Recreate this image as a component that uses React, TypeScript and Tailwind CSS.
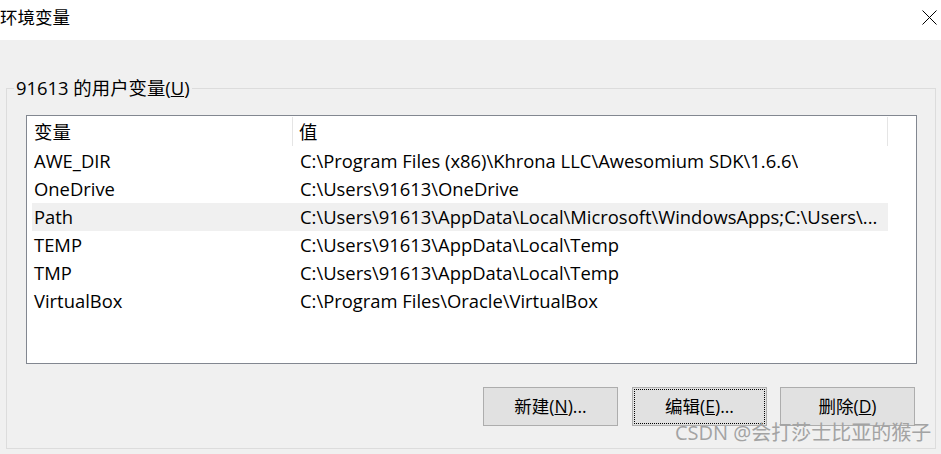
import React from 'react';

const rows = [
  { name: 'AWE_DIR', value: 'C:\\Program Files (x86)\\Khrona LLC\\Awesomium SDK\\1.6.6\\' },
  { name: 'OneDrive', value: 'C:\\Users\\91613\\OneDrive' },
  { name: 'Path', value: 'C:\\Users\\91613\\AppData\\Local\\Microsoft\\WindowsApps;C:\\Users\\...', selected: true },
  { name: 'TEMP', value: 'C:\\Users\\91613\\AppData\\Local\\Temp' },
  { name: 'TMP', value: 'C:\\Users\\91613\\AppData\\Local\\Temp' },
  { name: 'VirtualBox', value: 'C:\\Program Files\\Oracle\\VirtualBox' },
];

const font = { fontFamily: '"Open Sans", "Noto Sans CJK SC", sans-serif' };

const Button: React.FC<{ label: string; hot: string; tail?: string; focused?: boolean; className?: string }> = ({
  label,
  hot,
  tail = '',
  focused,
  className = '',
}) => (
  <div
    className={`relative w-[135px] h-[39px] bg-[#e1e1e1] border border-[#adadad] flex items-center justify-center text-[17.5px] text-black ${className}`}
  >
    {focused && <div className="absolute inset-[1px] border border-dotted border-black" />}
    <span>
      {label}(<u>{hot}</u>){tail}
    </span>
  </div>
);

export default function App() {
  return (
    <div className="relative w-[941px] h-[454px] bg-[#f0f0f0] overflow-hidden text-black" style={font}>
      {/* Title bar */}
      <div className="h-10 bg-white flex items-center justify-between pr-[4px]">
        <span className="text-[17.5px] leading-none -mt-[4px]">环境变量</span>
        <svg width="15" height="15" viewBox="0 0 15 15" className="-mt-[5px]">
          <path d="M0.5 0.5 L14.5 14.5 M14.5 0.5 L0.5 14.5" stroke="#000" strokeWidth="1" fill="none" />
        </svg>
      </div>

      {/* Group box */}
      <div className="relative ml-[6px] mt-[48px] w-[930px] h-[361px] border border-[#dcdcdc] pl-[19px] pt-[26px]">
        <span className="absolute left-[7px] -top-[13px] px-[2px] bg-[#f0f0f0] text-[18.4px] leading-[24px]">
          91613 的用户变量(<u>U</u>)
        </span>

        {/* List */}
        <div className="w-[891px] h-[249px] border border-[#828790] bg-white">
          <div className="flex h-[31px] items-stretch text-[18.4px]">
            <div className="w-[266px] pl-[7px] flex items-center border-r border-[#e5e5e5] mt-[1px] mb-[1px]">变量</div>
            <div className="w-[595px] pl-[6px] flex items-center border-r border-[#e5e5e5] mt-[1px] mb-[1px]">值</div>
          </div>
          <div className="flex flex-col">
            {rows.map((r) => (
              <div
                key={r.name}
                className={`ml-[5px] w-[856px] h-[28px] flex items-center text-[18.4px] whitespace-nowrap overflow-hidden ${
                  r.selected ? 'bg-[#f0f0f0]' : ''
                }`}
              >
                <span className="w-[268px] pl-[2px] shrink-0">{r.name}</span>
                <span className="overflow-hidden">{r.value}</span>
              </div>
            ))}
          </div>
        </div>

        {/* Buttons */}
        <div className="flex justify-end pr-[20px] mt-[23px]">
          <Button label="新建" hot="N" tail="..." />
          <Button label="编辑" hot="E" tail="..." focused className="ml-[14px]" />
          <Button label="删除" hot="D" className="ml-[13px]" />
        </div>
      </div>

      {/* Watermark */}
      <div className="absolute left-[675px] top-[420px] text-[20px] leading-[26px] text-[#a3a3a3] whitespace-nowrap">
        CSDN @会打莎士比亚的猴子
      </div>
    </div>
  );
}
